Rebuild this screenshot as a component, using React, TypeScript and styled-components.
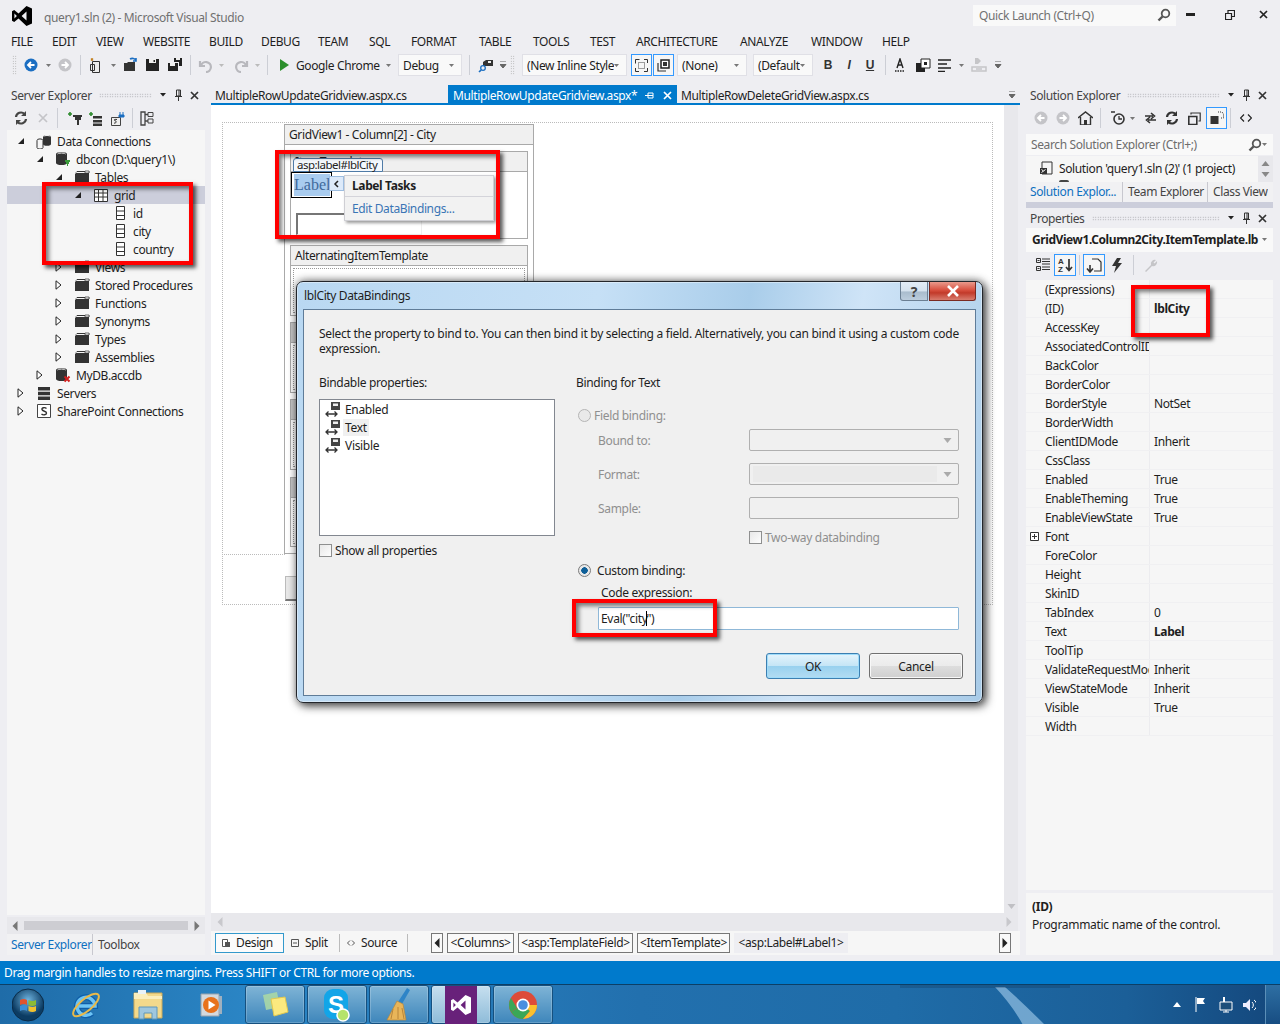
import React from "react";
import styled, { createGlobalStyle } from "styled-components";

const Global = createGlobalStyle`
  html, body { margin: 0; padding: 0; background: #eeeef2; }
  * { box-sizing: border-box; }
  body { font-family: "Noto Sans", "Open Sans", sans-serif; font-size: 12px; letter-spacing: -0.38px; color: #1e1e1e; }
  svg { display: block; flex: none; }
`;

const Page = styled.div`
  position: relative; width: 1280px; height: 1024px; overflow: hidden;
  display: flex; flex-direction: column; background: #eeeef2;
`;
/* ---------- title + menu ---------- */
const TitleBar = styled.div`height: 31px; display: flex; align-items: center; padding-left: 12px; flex: none;`;
const TitleText = styled.div`margin-left: 12px; margin-top: 3px; color: #717171; width: 929px; flex: none;`;
const QuickLaunch = styled.div`
  width: 203px; height: 21px; margin-top: -1px; background: #f9f9f9; color: #717171; flex: none;
  display: flex; align-items: center; justify-content: space-between; padding: 0 5px 0 6px;
`;
const WinBtns = styled.div`display: grid; grid-template-columns: 39px 34px 9px; align-items: center; margin: -2px 0 0 10px;`;
const MenuBar = styled.div`height: 20px; display: flex; align-items: center; padding-left: 11px; flex: none;`;
const MenuItem = styled.div<{ $w: number }>`width: ${p => p.$w}px; flex: none; white-space: nowrap;`;
/* ---------- toolbar ---------- */
const ToolBar = styled.div`height: 28px; display: flex; align-items: center; padding-left: 12px; flex: none;`;
const Slot = styled.div<{ $w: number; $on?: boolean; $ml?: number }>`
  width: ${p => p.$w}px; height: 22px; flex: none; display: flex; align-items: center; justify-content: center; margin-left: ${p => p.$ml ?? 0}px;
  ${p => p.$on ? "border: 1px solid #3399ff; background: #f6f6f6;" : ""}
`;
const Grip = styled.div`width: 5px; height: 20px; flex: none; background-image: radial-gradient(#a0a0a0 0.6px, transparent 0.8px); background-size: 2.5px 2.5px;`;
const Sep = styled.div<{ $ml?: number; $mr?: number }>`width: 1px; height: 20px; background: #ccced5; flex: none; margin: 0 ${p => p.$mr ?? 5}px 0 ${p => p.$ml ?? 5}px;`;
const Combo = styled.div<{ $w: number; $ml?: number }>`
  width: ${p => p.$w}px; margin-left: ${p => p.$ml ?? 0}px; height: 22px; background: #f9f9f9; border: 1px solid #e0e0e6; flex: none;
  display: flex; align-items: center; justify-content: space-between; padding: 0 6px 0 4px; white-space: nowrap; overflow: hidden;
`;
const Clip = styled.span`overflow: hidden; min-width: 0;`;
const GlyphB = styled.span<{ $i?: boolean; $u?: boolean }>`
  font-family: "Liberation Sans", sans-serif; font-size: 12px; font-weight: 700; color: #333;
  font-style: ${p => p.$i ? "italic" : "normal"}; text-decoration: ${p => p.$u ? "underline" : "none"};
`;
const PlayText = styled.div`width: 88px; flex: none; white-space: nowrap;`;
/* ---------- main ---------- */
const Main = styled.div`height: 870px; margin-top: 6px; display: flex; padding-left: 7px; flex: none;`;
const Side = styled.div<{ $w: number; $ml?: number }>`width: ${p => p.$w}px; margin-left: ${p => p.$ml ?? 0}px; flex: none; display: flex; flex-direction: column; margin-top: 1px;`;
const PaneHead = styled.div<{ $mt?: number }>`height: 18px; margin-top: ${p => p.$mt ?? 0}px; display: flex; align-items: center; padding-left: 4px; color: #444; flex: none;`;
const HeadDots = styled.div`
  flex: 1; height: 5px; margin: 1px 8px 0 7px;
  background-image: radial-gradient(#a8a8ac 0.65px, transparent 0.85px); background-size: 2.5px 2.5px;
`;
const HeadBtns = styled.div`display: flex; align-items: center; gap: 7px; padding-right: 6px;`;
const PaneTools = styled.div<{ $mt?: number }>`height: 24px; display: flex; align-items: center; flex: none; padding-left: 6px; margin-top: ${p => p.$mt ?? 2}px;`;
const Tree = styled.div`flex: 1; background: #f6f6f6; padding-top: 2px; margin-bottom: 2px;`;
const TreeRow = styled.div<{ $lvl: number; $sel?: boolean }>`
  height: 18px; display: flex; align-items: center; padding-left: ${p => 7 + p.$lvl * 19}px;
  background: ${p => p.$sel ? "#cccedb" : "transparent"}; white-space: nowrap;
`;
const Arrow = styled.div`width: 13px; flex: none; display: flex; justify-content: center;`;
const TreeIcon = styled.div`width: 16px; flex: none; margin: 0 5px 0 9px; display: flex; justify-content: center;`;
const HScroll = styled.div`height: 17px; background: #e8e8ec; display: flex; align-items: center; padding: 0 5px; gap: 6px; flex: none;`;
const Thumb = styled.div`flex: 1; height: 9px; background: #cdcdd2;`;
const DockTabs = styled.div<{ $h: number }>`height: ${p => p.$h}px; display: flex; align-items: center; background: #f1f1f3; flex: none; padding-left: 4px; color: #444;`;
const DockTab = styled.div<{ $w: number; $on?: boolean; $sep?: boolean; $pb?: number }>`
  width: ${p => p.$w}px; height: 100%; display: flex; align-items: center; white-space: nowrap; overflow: hidden; padding: 0 0 ${p => p.$pb ?? 0}px ${p => p.$on ? 0 : 5}px; flex: none;
  color: ${p => p.$on ? "#0e70c0" : "#444"}; border-right: ${p => p.$sep ? "1px solid #c8c8cf" : "none"};
`;
/* centre */
const Center = styled.div`width: 809px; margin-left: 6px; flex: none; display: flex; flex-direction: column;`;
const DocTabs = styled.div`height: 20px; flex: none; display: flex; align-items: stretch; border-bottom: 2px solid #007acc;`;
const DocTab = styled.div<{ $w: number; $on?: boolean }>`
  width: ${p => p.$w}px; flex: none; display: flex; align-items: center; padding: 3px 0 0 ${p => p.$on ? 5 : 4}px; gap: 4px; white-space: nowrap;
  background: ${p => p.$on ? "#007acc" : "transparent"}; color: ${p => p.$on ? "#fff" : "#1e1e1e"};
`;
const DocTabName = styled.span`width: 188px; flex: none;`;
const TabClose = styled.span`margin-left: 5px;`;
const DocMore = styled.div`margin-left: auto; padding: 1px 4px 0 0; align-self: center;`;
const DocBody = styled.div`flex: 1; display: flex; min-height: 0;`;
const Canvas = styled.div`width: 793px; background: #fff; flex: none; padding: 17px 0 0 11px;`;
const VBar = styled.div`width: 14px; background: #e8e8ec; display: flex; align-items: flex-end; justify-content: center; padding-bottom: 4px;`;
const HBar = styled.div`
  height: 18px; width: 807px; background: #e8e8ec; flex: none; display: flex; align-items: center; justify-content: space-between; padding: 0 6px 0 6px;
`;
const ViewBar = styled.div`height: 24px; flex: none; background: #f6f6f6; display: flex; align-items: center; padding: 0 0 1px 4px; width: 809px;`;
const ViewBtn = styled.div<{ $w: number; $on?: boolean }>`
  width: ${p => p.$w}px; height: 20px; flex: none; display: flex; align-items: center; padding-left: ${p => p.$on ? 6 : 7}px; gap: 6px;
  ${p => p.$on ? "border: 1px solid #3399cc; background: #fbfbfb;" : ""}
`;
const ViewSep = styled.div`width: 1px; height: 18px; background: #bbb; flex: none;`;
const Crumb = styled.div<{ $w: number; $plain?: boolean }>`
  width: ${p => p.$w}px; height: 20px; flex: none; margin-left: 4px; display: flex; align-items: center; justify-content: center; white-space: nowrap;
  border: ${p => p.$plain ? "none" : "1px solid #777"}; background: ${p => p.$plain ? "#eeeef2" : "#f9f9f9"};
`;
const CrumbNav = styled.div<{ $ml: number }>`
  width: 12px; height: 20px; flex: none; margin-left: ${p => p.$ml}px; border: 1px solid #777; background: #f9f9f9;
  display: flex; align-items: center; justify-content: center;
`;
/* design surface */
const Margins = styled.div`
  width: 771px; height: 483px; border: 1px dotted #bbb; padding: 1px 0 0 61px;
`;
const GridBox = styled.div`
  width: 250px; height: 430px; border: 1px solid #a9a9a9; position: relative; background: #fff;
`;
const BoxHead = styled.div<{ $dim?: boolean }>`height: 20px; background: ${p => p.$dim ? "#c9c9c9" : "#f0f0f0"}; border-bottom: 1px solid #a9a9a9; padding-left: 4px; display: flex; align-items: center; flex: none;`;
const Tpl = styled.div<{ $h: number; $mt: number }>`
  width: 238px; margin: ${p => p.$mt}px 0 0 5px; height: ${p => p.$h}px; border: 1px solid #a9a9a9; background: #fff; display: flex; flex-direction: column;
`;
const TplDots = styled.div`flex: 1; margin: 2px; border: 1px dotted #999;`;
const TplBody = styled.div`padding: 0; display: flex; flex-direction: column; position: relative;`;
const LabelWrap = styled.div`
  width: 41px; height: 26px; border: 1px solid #000; padding: 1px 0 0 2px;
`;
const LabelSel = styled.div`
  width: 36px; height: 22px; background: #a9ccef; font-family: "Liberation Serif", serif; font-size: 16px; color: #40699b; line-height: 22px; letter-spacing: 0; white-space: nowrap;
`;
const FakeInput = styled.div`
  width: 126px; height: 22px; margin: 15px 0 0 5px; border-top: 2px solid #767676; border-left: 2px solid #767676; border-right: 1px solid #eee; border-bottom: 1px solid #eee;
`;
const TagChip = styled.div`
  position: absolute; left: 2px; top: -14px; height: 14px; width: 90px; background: #f4f8fd; border: 1px solid #4f7ba7; border-radius: 3px 3px 0 0;
  font-size: 11.5px; line-height: 12px; padding-left: 3px; white-space: nowrap; color: #222; letter-spacing: -0.5px;
`;
const Chevron = styled.div`
  position: absolute; left: 38px; top: 4px; width: 15px; height: 15px; background: #ddeafa; border: 1px solid #9dbde0; display: flex; align-items: center; justify-content: center; z-index: 2;
`;
const Tasks = styled.div`
  position: absolute; left: 53px; top: 3px; width: 150px; height: 46px; background: #f2f2f2; border: 1px solid #cfcfd4; box-shadow: 2px 2px 3px #0006; z-index: 1;
`;
const TasksHead = styled.div`height: 21px; font-weight: 700; padding: 0 0 2px 7px; display: flex; align-items: center; border-bottom: 1px solid #d4d4da;`;
const TasksLink = styled.div`height: 23px; padding-left: 7px; display: flex; align-items: center; color: #3a75b5;`;
const FootBtn = styled.div`margin: 22px 0 0 1px; width: 60px; height: 25px; background: #e8e8e8; border: 1px solid #bbb; border-bottom: 2px solid #777;`;
const OutDot = styled.div`position: absolute; left: -63px; top: 429px; width: 63px; border-top: 1px dotted #bbb;`;
/* right */
const SearchBox = styled.div`height: 21px; background: #f9f9f9; display: flex; align-items: center; padding: 0 2px 0 5px; margin-top: 4px; color: #6d6d6d; flex: none; justify-content: space-between;`;
const SolRow = styled.div`height: 26px; background: #f6f6f6; margin-top: 1px; display: flex; align-items: center; padding: 0 0 2px 13px; gap: 6px; flex: none; white-space: nowrap; position: relative;`;
const SolNext = styled.div`position: absolute; left: 33px; bottom: 0; width: 10px; height: 2px; background: #444; border-radius: 4px 4px 0 0;`;
const MiniScroll = styled.div`position: absolute; right: 0; top: 0; bottom: 0; width: 15px; background: #e8e8ec; display: flex; flex-direction: column; align-items: center; justify-content: center; gap: 6px;`;
const Strip = styled.div`height: 6px; background: #cccedb; flex: none;`;
const PropCombo = styled.div`height: 24px; background: #f9f9f9; margin-top: 1px; display: flex; align-items: center; justify-content: space-between; padding: 0 5px 2px 6px; font-weight: 700; white-space: nowrap; overflow: hidden; flex: none; letter-spacing: -0.42px;`;
const PropGrid = styled.div`flex: 1; background: #f6f6f6; margin-top: 3px; min-height: 0;`;
const PropRow = styled.div`
  height: 19px; display: grid; grid-template-columns: 16px 108px 1fr; align-items: center; white-space: nowrap; border-bottom: 1px solid #f0f0f2;
`;
const PlusCell = styled.div`display: flex; justify-content: center;`;
const PropName = styled.div`padding: 1px 0 0 3px; overflow: hidden; height: 100%; line-height: 18px; background: #f6f6f6; border-right: 1px solid #ececef;`;
const PropVal = styled.div<{ $b?: boolean }>`padding-left: 4px; font-weight: ${p => p.$b ? 700 : 400};`;
const PropDesc = styled.div`height: 62px; background: #f6f6f6; margin-top: 3px; padding: 5px 6px; flex: none; letter-spacing: -0.3px;`;
const DescTitle = styled.div`font-weight: 700; line-height: 18px;`;
const DescLine = styled.div`line-height: 18px;`;
/* status + taskbar */
const Status = styled.div`height: 23px; margin-top: 6px; background: #007acc; color: #fff; display: flex; align-items: center; padding-left: 4px; flex: none;`;
const Taskbar = styled.div`
  height: 40px; flex: none; position: relative; display: flex; align-items: stretch; overflow: hidden;
  border-top: 1px solid #0c3f66;
  background: linear-gradient(90deg, #1f6ca8 0%, #2b86c6 20%, #2270ae 50%, #1f6ca8 70%, #1b5f98 88%, #14477c 100%);
`;
const Swoosh = styled.svg`position: absolute; left: 900px; top: 0; pointer-events: none;`;
const PinCell = styled.div<{ $w: number }>`width: ${p => p.$w}px; flex: none; display: flex; align-items: center; justify-content: center; position: relative;`;
const Tile = styled.div<{ $hot?: boolean }>`
  width: 60px; margin-right: 2px; flex: none; display: flex; align-items: center; justify-content: center; position: relative;
  border: 1px solid #15507f; border-radius: 3px; box-shadow: inset 0 0 0 1px #ffffff33;
  background: linear-gradient(180deg, ${p => p.$hot ? "#c6dfef, #8fbcd9" : "#7fb4d6, #3e86bb"});
`;
const Tray = styled.div`margin-left: auto; display: flex; align-items: center; position: relative;`;
const ShowDesk = styled.div`width: 15px; align-self: stretch; margin-left: 7px; border-left: 1px solid #5b8fb8; background: linear-gradient(180deg, #2e6fa3, #174d82);`;
/* red highlight */
const Red = styled.div<{ $x: number; $y: number; $w: number; $h: number }>`
  position: absolute; left: ${p => p.$x}px; top: ${p => p.$y}px; width: ${p => p.$w}px; height: ${p => p.$h}px; z-index: 20;
  border: 4px solid #f00; pointer-events: none;
  box-shadow: 3px 3px 4px rgba(0,0,0,.65), inset 3px 3px 4px rgba(0,0,0,.5);
`;
/* dialog */
const Dialog = styled.div`
  position: absolute; left: 296px; top: 281px; width: 687px; height: 422px; z-index: 10; border-radius: 7px; border: 1px solid #23262b;
  background: linear-gradient(100deg, #b9d8f2 0%, #c6e0f6 40%, #a9cdea 60%, #cfe4f7 75%, #a8cbe8 100%);
  box-shadow: 0 0 0 1px #fff6 inset, 3px 3px 10px rgba(0,0,0,.7), 0 -1px 8px rgba(0,0,0,.35); padding: 0 6px 6px 6px; display: flex; flex-direction: column;
`;
const DlgTitle = styled.div`height: 27px; flex: none; display: flex; align-items: center; padding-left: 1px; position: relative;`;
const DlgBtns = styled.div`position: absolute; right: 0; top: 0; display: flex; gap: 1px;`;
const DlgHelp = styled.div`width: 28px; height: 19px; border: 1px solid #6b7f93; border-top: none; border-radius: 0 0 0 3px; background: linear-gradient(#e3edf7 0%, #d5e2ee 50%, #a9bccd 55%, #bccddd 100%); display: flex; align-items: center; justify-content: center; font-weight: 700; font-size: 14px; color: #444;`;
const DlgClose = styled.div`width: 47px; height: 19px; border: 1px solid #7a2a22; border-top: none; border-radius: 0 0 3px 0; background: linear-gradient(#e99a8c 0%, #d8503f 45%, #c23a2a 60%, #d87c6e 100%); display: flex; align-items: center; justify-content: center;`;
const DlgBody = styled.div`flex: 1; background: #f0f0f0; border: 1px solid #5f7c98; padding: 16px 15px 0 15px; letter-spacing: -0.32px; position: relative;`;
const DlgDesc = styled.div`line-height: 15px; width: 650px; height: 30px; letter-spacing: -0.28px;`;
const DlgCols = styled.div`display: grid; grid-template-columns: 236px 383px; column-gap: 21px; margin-top: 19px;`;
const ColLabel = styled.div`height: 16px; line-height: 15px;`;
const ListBox = styled.div`height: 137px; background: #fff; border: 1px solid #828790; margin-top: 8px; padding: 0 0 0 5px;`;
const ListRow = styled.div`height: 18px; display: flex; align-items: center; gap: 2px;`;
const ListText = styled.span<{ $hi?: boolean }>`padding: 0 2px; ${p => p.$hi ? "background: #f0f0f0;" : ""}`;
const CheckRow = styled.div<{ $off?: boolean; $ml?: number; $mt: number }>`display: flex; align-items: center; gap: 3px; margin: ${p => p.$mt}px 0 0 ${p => p.$ml ?? 0}px; height: 16px; color: ${p => p.$off ? "#8f8f8f" : "inherit"};`;
const Check = styled.div`width: 13px; height: 13px; border: 1px solid #8e8f8f; background: linear-gradient(135deg, #e8e8e8, #fdfdfd);`;
const RadioRow = styled.div<{ $off?: boolean; $mt: number; $gap: number }>`display: flex; align-items: center; gap: ${p => p.$gap}px; margin: ${p => p.$mt}px 0 0 2px; height: 16px; color: ${p => p.$off ? "#8f8f8f" : "inherit"};`;
const Radio = styled.div<{ $on?: boolean }>`
  width: 13px; height: 13px; border-radius: 50%; border: 1px solid ${p => p.$on ? "#7b7b7b" : "#b5b5b5"}; background: ${p => p.$on ? "radial-gradient(circle, #0e5f98 0 3px, #e8e8e8 3.5px)" : "#e9e9e9"};
`;
const FieldRow = styled.div<{ $mt: number }>`display: grid; grid-template-columns: 173px 210px; align-items: center; height: 22px; margin-top: ${p => p.$mt}px;`;
const FieldLbl = styled.div`color: #8f8f8f; padding-left: 22px;`;
const FieldBox = styled.div`
  height: 22px; background: #f0f0f0; border: 1px solid #b0b0b0; border-radius: 2px; display: flex; align-items: center; justify-content: flex-end; padding: 2px 6px 2px 3px; gap: 6px;
`;
const FieldInner = styled.div`flex: 1; height: 100%; background: #eaeaea;`;
const CodeLbl = styled.div`margin: 7px 0 0 25px; height: 16px; line-height: 15px;`;
const CodeInput = styled.div`
  height: 23px; margin: 6px 0 0 22px; background: #fff; border: 1px solid #8fb8d8; border-radius: 1px; padding-left: 2px; display: flex; align-items: center;
`;
const Caret = styled.span`display: inline-block; width: 1px; height: 15px; background: #000; margin: 0 -1px; vertical-align: middle;`;
const DlgActions = styled.div`display: flex; justify-content: flex-end; gap: 9px; margin: 23px -3px 0 0;`;
const DlgBtn = styled.div<{ $def?: boolean }>`
  width: 94px; height: 26px; border-radius: 3px; display: flex; align-items: center; justify-content: center;
  border: 1px solid ${p => p.$def ? "#3c7fb1" : "#707070"};
  background: ${p => p.$def ? "linear-gradient(#e5f4fc 0%, #c4e5f6 50%, #98d1ef 51%, #b3dcf2 100%)" : "linear-gradient(#f2f2f2 0%, #ebebeb 50%, #dddddd 51%, #cfcfcf 100%)"};
  box-shadow: ${p => p.$def ? "inset 0 0 0 1px #9fdcfa" : "inset 0 0 0 1px #f8f8f8"};
`;

/* ---------- icons ---------- */
const S = ({ w = 16, h = 16, children }: { w?: number; h?: number; children: React.ReactNode }) => (
  <svg width={w} height={h} viewBox={`0 0 ${w} ${h}`}>{children}</svg>
);
const Dd = ({ c = "#555" }: { c?: string }) => <S w={7} h={4}><path d="M0 0h6L3 3.500z" fill={c} /></S>;
const DdSmall = ({ c = "#777" }: { c?: string }) => <S w={6} h={3}><path d="M0 0h5L2.500 3z" fill={c} /></S>;
const Overflow = () => <S w={7} h={8}><path d="M0 0h6M0 3.500h6L3 7z" stroke="#666" strokeWidth="1" fill="#666" /></S>;
const XIco = ({ c = "#333", s = 9, sw = 1.7 }: { c?: string; s?: number; sw?: number }) => <S w={s} h={s}><path d={`M1 1L${s - 1} ${s - 1}M${s - 1} 1L1 ${s - 1}`} stroke={c} strokeWidth={sw} /></S>;
const Pin = ({ c = "#333" }: { c?: string }) => <S w={9} h={12}><path d="M2.500 1h4v6h-4zM1 7.500h7M4.500 8v4M5 1v6" stroke={c} fill="none" /></S>;
const PaneBtns = () => (
  <HeadBtns><Dd c="#222" /><Pin /><XIco /></HeadBtns>
);
const Mag = ({ c = "#555" }: { c?: string }) => <S w={14} h={14}><circle cx="8.500" cy="5.500" r="3.800" fill="none" stroke={c} strokeWidth="1.800" /><path d="M5.500 8.500L1.500 12.500" stroke={c} strokeWidth="2.400" /></S>;
const VsLogo = ({ c = "#000", w = 20, h = 20 }: { c?: string; w?: number; h?: number }) => (
  <svg width={w} height={h} viewBox="0 0 20 20"><path fill={c} fillRule="evenodd" d="M14.500 0L20 2.400v15.200L14.500 20 6.500 12.600 2.200 16 0 14.800V5.200L2.200 4l4.300 3.400zM14.500 5.500L9.600 10l4.900 4.500zM2.400 7.500v5L4.900 10z" /></svg>
);
const BackC = ({ c }: { c: string }) => <S w={14} h={14}><circle cx="7" cy="7" r="6.500" fill={c} /><path d="M10.500 7H4.500M7 4L4 7l3 3" stroke="#fff" strokeWidth="1.800" fill="none" /></S>;
const FwdC = ({ c }: { c: string }) => <S w={14} h={14}><circle cx="7" cy="7" r="6.500" fill={c} /><path d="M3.500 7h6M7 4l3 3-3 3" stroke="#fff" strokeWidth="1.800" fill="none" /></S>;
const NewProj = () => <S><path d="M4.500 4.500h7v11h-7zM2.500 7.500h4v6h-4z" fill="#eee" stroke="#333" /><path d="M3 1.500l1 1 1-1M3 3.500l1-1 1 1" stroke="#c27d1a" strokeWidth="1.200" fill="none" /></S>;
const OpenF = () => <S><path d="M1 6h3l1-1h7v9H1z" fill="#333" /><path d="M7 2a4 3 0 016 1M13 1v3h-3" stroke="#1b6ec2" strokeWidth="1.600" fill="none" /></S>;
const Save = () => <S><path d="M1 2h13v12H1z" fill="#222" /><path d="M4 2h7v4H4z" fill="#eee" /><path d="M8.500 3h1.500v2H8.500z" fill="#222" /></S>;
const SaveAll = () => <S><path d="M1 6h10v8H1z" fill="#222" /><path d="M3 6h5v3H3z" fill="#eee" /><path d="M7 1h8v8h-3V5H7z" fill="#222" /><path d="M9 1h4v2H9z" fill="#eee" /></S>;
const Undo = ({ flip }: { flip?: boolean }) => <svg width="15" height="15" viewBox="0 0 15 15" style={flip ? { transform: "scaleX(-1)" } : undefined}><path d="M2 3v5h5M3 8a5 5 0 115 6" stroke="#b8b8bd" strokeWidth="2.200" fill="none" /></svg>;
const Play = () => <S w={11} h={12}><path d="M1 0l9 6-9 6z" fill="#2c8f2c" /></S>;
const FindIco = () => <S><path d="M8 3h7v6H8zM5 5l3-2v6H5z" fill="#333" /><path d="M10 4h3v2h-3z" fill="#eee" /><circle cx="5" cy="11" r="2.300" fill="none" stroke="#1b6ec2" strokeWidth="1.300" /><path d="M3.300 12.800L1 15" stroke="#1b6ec2" strokeWidth="1.600" /></S>;
const Resize = () => <S w={13} h={13}><path d="M.5 4.500v-4h4M.5 9v3.500H4M9 .5h3.500V4M12.500 9v3.500H9" fill="none" stroke="#333" /><path d="M3.500 3.500h6v6h-6z" fill="none" stroke="#444" strokeDasharray="1 1" /></S>;
const Abso = () => <S w={14} h={14}><path d="M1 5v8h8" fill="none" stroke="#333" strokeWidth="1.200" /><path d="M4 2h8v8H4z" fill="#fff" stroke="#222" strokeWidth="1.500" /><path d="M6 4h4v4H6z" fill="#333" /></S>;
const AIco = () => <S w={12} h={15}><path d="M3 10L6 1l3 9M4 7h4" stroke="#222" strokeWidth="1.400" fill="none" /><path d="M1 13h10" stroke="#222" strokeWidth="1.600" strokeDasharray="1.500 1" /></S>;
const BgIco = () => <S><path d="M1 6h9v9H1z" fill="#222" /><path d="M6 2h9v9H6z" fill="#fff" stroke="#222" /><path d="M9 5h3v3H9z" fill="#222" /></S>;
const AlignIco = () => <S w={14} h={13}><path d="M0 1h13M0 5h9M0 9h13M0 12.500h7" stroke="#222" strokeWidth="1.600" /></S>;
const LinkIco = () => <S><path d="M4 1h3l3 3-3 3H4z" fill="#c5c5c8" /><path d="M1 10h14v4H1z" fill="none" stroke="#c5c5c8" strokeWidth="1.500" /><path d="M5 12h6" stroke="#c5c5c8" strokeWidth="1.500" /></S>;
const Refresh = ({ c = "#444" }: { c?: string }) => <S w={14} h={14}><path d="M2 6a5 5 0 018.500-3M12 8a5 5 0 01-8.500 3" stroke={c} strokeWidth="2.200" fill="none" /><path d="M12 0v5H7zM2 14V9h5z" fill={c} /></S>;
const PlugAdd = () => <S w={15} h={15}><path d="M1 3h4M3 1v4" stroke="#2d8a2d" strokeWidth="1.600" /><path d="M6 4h9v2h-1v3H8V6H6zM10 9h2v5h-2z" fill="#333" /></S>;
const ServAdd = () => <S w={15} h={15}><path d="M1 3h4M3 1v4" stroke="#2d8a2d" strokeWidth="1.600" /><path d="M5 5h9v2.500H5zM5 9h9v2.500H5zM5 12.500h9V15H5z" fill="#333" /></S>;
const SpAdd = () => <S w={15} h={15}><path d="M1.500 6.500h9v8h-9z" fill="#eee" stroke="#444" /><path d="M4 12c2 1 3-2 1-2.500S5 8 7 8.500" stroke="#333" fill="none" /><path d="M10 1v3M13 1v3M9 4h5v2h-5z" stroke="#1b6ec2" fill="#1b6ec2" /></S>;
const TreeV = () => <S w={14} h={15}><path d="M1 1h4v13H1zM5 3.500h3M5 10h3" fill="none" stroke="#444" strokeWidth="1.300" /><path d="M8 1.500h5v4H8zM8 8h5v4H8z" fill="none" stroke="#444" /></S>;
const TriOpen = () => <S w={8} h={8}><path d="M7 1v6H1z" fill="#222" /></S>;
const TriClosed = () => <S w={7} h={10}><path d="M1 .8l5 4.200-5 4.200z" fill="#fff" stroke="#222" /></S>;
const DbIco = () => <S w={16} h={15}><path d="M1 6.500a3 1.600 0 016 0v7a3 1.600 0 01-6 0z" fill="#f6f6f6" stroke="#333" /><path d="M7 3a4 1.800 0 018 0v7a4 1.800 0 01-8 0z" fill="#333" /><path d="M8 2.500a3 1 0 016 0" stroke="#f6f6f6" fill="none" /></S>;
const DbOne = ({ mark }: { mark: "plug" | "x" }) => <S w={16} h={16}><path d="M1 3a5.500 2 0 0111 0v9a5.500 2 0 01-11 0z" fill="#333" /><path d="M2.500 3a4 1 0 018 0" stroke="#f6f6f6" fill="none" />{mark === "plug" ? <path d="M10 9h5v2h-1v2h-3v-2h-1zM12 13h1v2h-1z" fill="#3a9a3a" /> : <path d="M9.500 9.500l5 5M14.500 9.500l-5 5" stroke="#d01f1f" strokeWidth="2" />}</S>;
const Folder = () => <S w={15} h={14}><path d="M0 13V4l1-1h13V13z" fill="#333" /><path d="M1 2.500l1-1h7l5 0v1" fill="none" stroke="#333" /><path d="M10 1h4v2h-4z" fill="#f6f6f6" stroke="#333" strokeWidth=".7" /></S>;
const TableI = () => <S w={14} h={13}><path d="M.5.5h13v12H.5z" fill="#fff" stroke="#333" /><path d="M.5 4h13M.5 8h13M4.500.5v12M9 .5v12" stroke="#333" /></S>;
const ColI = () => <S w={9} h={14}><path d="M.5.5h8v13h-8zM.5 5h8M.5 9.500h8" fill="#fff" stroke="#333" /></S>;
const ServerI = () => <S w={12} h={13}><path d="M0 0h12v3.500H0zM0 4.700h12v3.500H0zM0 9.400h12v3.500H0z" fill="#333" /></S>;
const SpI = () => <S w={14} h={14}><path d="M.5.5h13v13H.5z" fill="#fff" stroke="#444" /><path d="M9.500 4.500C8 3 4.500 3.500 5 5.500s4.500 1.500 4.500 3.500-3.500 2.500-5 1" stroke="#333" strokeWidth="1.400" fill="none" /></S>;
const Home = () => <S w={15} h={14}><path d="M0 7l7.500-6L15 7M2.500 6v8h10V6" fill="none" stroke="#333" strokeWidth="1.400" /><path d="M6 9h3v5H6z" fill="#333" /></S>;
const Clock = () => <S w={15} h={14}><circle cx="9" cy="8" r="5" fill="none" stroke="#333" strokeWidth="1.600" /><path d="M9 5v3h3M1 1h4" stroke="#333" strokeWidth="1.300" fill="none" /></S>;
const SyncArr = () => <S w={13} h={12}><path d="M1 4h8M7 1l3.500 3L7 7M12 8H4M6 5L2.500 8 6 11" stroke="#333" strokeWidth="1.600" fill="none" /></S>;
const Stack = () => <S w={13} h={13}><path d="M.8 4.500h8v8h-8z" fill="none" stroke="#333" strokeWidth="1.600" /><path d="M3 2.500V1h9.200v8H10.500" fill="none" stroke="#333" strokeWidth="1.200" /></S>;
const Files = () => <S w={14} h={14}><path d="M.5 5h8v8h-8z" fill="#333" /><path d="M8 1h4l1.500 2v4H10" fill="none" stroke="#333" strokeDasharray="1 1" /></S>;
const SlnI = () => <S w={14} h={14}><path d="M3 1h10v12H3z" fill="none" stroke="#333" /><path d="M1 7h7v6H1z" fill="#333" /><path d="M2.500 8.500l2 1.500-2 1.500M6.500 8.500l-2 1.500" stroke="#fff" fill="none" /></S>;
const PropCat = () => <S w={15} h={14}><path d="M.5.5h4v4h-4zM.5 8.500h4v4h-4z" fill="none" stroke="#333" /><path d="M1.500 2.500h2M1.500 10.500h2M6 1h8M6 3.500h8M6 6h8M6 9h8M6 11.500h8" stroke="#333" /></S>;
const AzIco = () => <S w={17} h={16}><text x="1" y="7" fontSize="8" fontWeight="700" fill="#333" fontFamily="Liberation Sans">A</text><text x="1" y="15" fontSize="8" fontWeight="700" fill="#333" fontFamily="Liberation Sans">Z</text><path d="M12 2v11M9 10l3 3.500L15 10" stroke="#333" strokeWidth="1.700" fill="none" /></S>;
const PropPage = () => <S w={16} h={15}><path d="M6 1h6l3 3v9H8" fill="none" stroke="#333" strokeWidth="1.200" /><path d="M4 7v6M1 10.500L4 14l3-3.500" stroke="#333" strokeWidth="1.600" fill="none" /></S>;
const Bolt = () => <S w={11} h={15}><path d="M6 0h4L7 5h4L3 15l2-7H1z" fill="#333" /></S>;
const Wrench = () => <S w={14} h={14}><path d="M1 13l6-6a4 4 0 015-5L9.500 4.500l1 1L13 3a4 4 0 01-5 5l-6 6z" fill="#c5c5c8" /></S>;
const Bind = () => <S w={16} h={16}><path d="M6 1h9v8H6z" fill="#444" /><path d="M8 2.500h5V5H8z" fill="#eee" /><path d="M1 13h11M3.500 10.500L1 13l2.500 2.500M9.500 10.500L12 13l-2.500 2.500" stroke="#333" strokeWidth="1.300" fill="none" /></S>;
const Chev = () => <S w={7} h={8}><path d="M5 1L2 4l3 3" stroke="#222" strokeWidth="1.500" fill="none" /></S>;
const NavTri = ({ right, c = "#222" }: { right?: boolean; c?: string }) => <S w={6} h={10}><path d={right ? "M.5 0l5 5-5 5z" : "M5.500 0l-5 5 5 5z"} fill={c} /></S>;
const UpTri = () => <S w={9} h={5}><path d="M4.500 0l4 5H.5z" fill="#888" /></S>;
const DownTri = ({ c = "#c0c0c4" }: { c?: string }) => <S w={9} h={5}><path d="M.5 0h8l-4 5z" fill={c} /></S>;
const Plus = () => <S w={9} h={9}><path d="M.5.5h8v8h-8z" fill="#fff" stroke="#333" /><path d="M2 4.500h5M4.500 2v5" stroke="#333" /></S>;
const Orb = () => <S w={32} h={34}><defs><radialGradient id="orb" cx="50%" cy="35%"><stop offset="0" stopColor="#6fb4e0" /><stop offset="1" stopColor="#0c3c63" /></radialGradient></defs><circle cx="16" cy="17" r="16" fill="url(#orb)" stroke="#0b2c48" /><path d="M8 12q4-2 7 0v5q-3-2-7 0z" fill="#e2542f" /><path d="M16.500 12q4 2 7.500 0v5q-3.500 2-7.500 0z" fill="#8dbb35" /><path d="M8 18q4-2 7 0v5q-3-2-7 0z" fill="#3b8fd9" /><path d="M16.500 18q4 2 7.500 0v5q-3.500 2-7.500 0z" fill="#f2c12e" /></S>;
const IeIco = () => <S w={32} h={34}><path d="M8 18h17a9 9 0 10-3 7" stroke="#0f5ea8" strokeWidth="6" fill="none" /><path d="M8 18h17a9 9 0 10-3 7" stroke="#6cc4f5" strokeWidth="3.500" fill="none" /><ellipse cx="16" cy="17" rx="16" ry="6" transform="rotate(-40 16 17)" fill="none" stroke="#e8b94a" strokeWidth="2" /></S>;
const Explorer = () => <S w={32} h={34}><path d="M2 5h28v25H2z" fill="#f3d98b" stroke="#caa95a" /><path d="M2 5h12l2 3h14v3H2z" fill="#fbeebd" /><path d="M6 2h8v4H6z" fill="#e9f2f8" /><path d="M7 19h18v12h-5v-6h-8v6H7z" fill="#9fc7de" stroke="#5f97ba" /></S>;
const Media = () => <S w={26} h={30}><path d="M2 4h18v22H2z" fill="#d5d9dd" stroke="#98a3ad" /><circle cx="12" cy="15" r="8" fill="#e8721c" /><path d="M9.500 10.500l7 4.500-7 4.500z" fill="#fff" /><path d="M20 6h3v18h-3z" fill="#9fb0bf" /></S>;
const Sticky = () => <S w={30} h={28}><path d="M3 4l14-3 3 15-14 3z" fill="#a8d7a6" opacity=".9" /><path d="M11 8l14-2 3 15-14 4z" fill="#fbe97f" stroke="#e1c84f" /></S>;
const Skype = () => <S w={28} h={34}><rect x="1" y="1" width="24" height="30" rx="9" fill="#12a5e8" /><text x="5" y="25" fontSize="24" fontWeight="700" fill="#fff" fontFamily="Liberation Sans">S</text><circle cx="20" cy="27" r="6" fill="#b5e36b" stroke="#fff" strokeWidth="1.500" /></S>;
const Broom = () => <S w={30} h={36}><path d="M23 1l3 2-8 14-4-2z" fill="#2e84c7" /><path d="M13 14l6 3 3 16H3z" fill="#e8b559" stroke="#b8863a" strokeWidth=".7" /><path d="M9 22l-2 10M14 20v12M18 21l2 11" stroke="#b8863a" /></S>;
const VsTile = () => <S w={32} h={38}><path d="M0 0h32v38H0z" fill="#68217a" /><g transform="translate(6 9)"><path fill="#fff" fillRule="evenodd" d="M14.500 0L20 2.400v15.200L14.500 20 6.500 12.600 2.200 16 0 14.800V5.200L2.200 4l4.300 3.400zM14.500 5.500L9.600 10l4.900 4.500zM2.400 7.500v5L4.900 10z" /></g></S>;
const Chrome = () => <S w={30} h={30}><circle cx="15" cy="15" r="14" fill="#dd4b39" /><path d="M15 15L3 22A14 14 0 0015 29l7-8z" fill="#3aa757" /><path d="M15 15l7 6-7 8A14 14 0 0029 15z" fill="#fbc02d" /><path d="M3 8l6 10L3 22A14 14 0 013 8z" fill="#3aa757" /><circle cx="15" cy="15" r="6.500" fill="#fff" /><circle cx="15" cy="15" r="4.800" fill="#4a8fe0" /></S>;
const Flag = () => <S w={12} h={15}><path d="M1 0v15" stroke="#fff" /><path d="M2 1h8l-2 3 2 3H2z" fill="#fff" /></S>;
const Net = () => <S w={14} h={16}><path d="M1 5h12v8H1z" fill="#1d4f7a" stroke="#fff" /><path d="M4 15h6M7 13v2" stroke="#fff" /><path d="M4 0h2v5H4z" fill="#fff" /></S>;
const Vol = () => <S w={14} h={14}><path d="M1 5h3l4-4v12L4 9H1z" fill="#eef" /><path d="M10 4a4 4 0 010 6M12 2a6 6 0 010 10" stroke="#fff" fill="none" /></S>;

/* ---------- data ---------- */
const menus: [string, number][] = [["FILE", 41], ["EDIT", 44], ["VIEW", 47], ["WEBSITE", 66], ["BUILD", 52], ["DEBUG", 57], ["TEAM", 51], ["SQL", 42], ["FORMAT", 68], ["TABLE", 54], ["TOOLS", 57], ["TEST", 46], ["ARCHITECTURE", 104], ["ANALYZE", 71], ["WINDOW", 71], ["HELP", 40]];
type Node = { t: string; l: number; a?: "o" | "c"; i: React.ReactNode; sel?: boolean };
const tree: Node[] = [
  { t: "Data Connections", l: 0, a: "o", i: <DbIco /> },
  { t: "dbcon (D:\\query1\\)", l: 1, a: "o", i: <DbOne mark="plug" /> },
  { t: "Tables", l: 2, a: "o", i: <Folder /> },
  { t: "grid", l: 3, a: "o", i: <TableI />, sel: true },
  { t: "id", l: 4, i: <ColI /> },
  { t: "city", l: 4, i: <ColI /> },
  { t: "country", l: 4, i: <ColI /> },
  { t: "Views", l: 2, a: "c", i: <Folder /> },
  { t: "Stored Procedures", l: 2, a: "c", i: <Folder /> },
  { t: "Functions", l: 2, a: "c", i: <Folder /> },
  { t: "Synonyms", l: 2, a: "c", i: <Folder /> },
  { t: "Types", l: 2, a: "c", i: <Folder /> },
  { t: "Assemblies", l: 2, a: "c", i: <Folder /> },
  { t: "MyDB.accdb", l: 1, a: "c", i: <DbOne mark="x" /> },
  { t: "Servers", l: 0, a: "c", i: <ServerI /> },
  { t: "SharePoint Connections", l: 0, a: "c", i: <SpI /> },
];
const props: [string, string?, boolean?, boolean?][] = [
  ["(Expressions)"], ["(ID)", "lblCity", true], ["AccessKey"], ["AssociatedControlID"], ["BackColor"], ["BorderColor"],
  ["BorderStyle", "NotSet"], ["BorderWidth"], ["ClientIDMode", "Inherit"], ["CssClass"], ["Enabled", "True"], ["EnableTheming", "True"],
  ["EnableViewState", "True"], ["Font", undefined, false, true], ["ForeColor"], ["Height"], ["SkinID"], ["TabIndex", "0"], ["Text", "Label", true],
  ["ToolTip"], ["ValidateRequestMode", "Inherit"], ["ViewStateMode", "Inherit"], ["Visible", "True"], ["Width"],
];

export default function App() {
  return (
    <Page>
      <Global />
      <TitleBar>
        <VsLogo />
        <TitleText>query1.sln (2) - Microsoft Visual Studio</TitleText>
        <QuickLaunch>Quick Launch (Ctrl+Q)<Mag /></QuickLaunch>
        <WinBtns>
          <S w={9} h={4}><path d="M0 0h9v3H0z" fill="#222" /></S>
          <S w={10} h={10}><path d="M.5 3.500h6v6h-6zM3 3V.5h6.500v6H7" fill="none" stroke="#222" strokeWidth="1.200" /></S>
          <XIco c="#222" />
        </WinBtns>
      </TitleBar>
      <MenuBar>{menus.map(([m, w]) => <MenuItem key={m} $w={w}>{m}</MenuItem>)}</MenuBar>
      <ToolBar>
        <Grip />
        <Slot $w={28}><BackC c="#1b6ec2" /></Slot>
        <Slot $w={8}><DdSmall /></Slot>
        <Slot $w={24}><FwdC c="#c4c4c8" /></Slot>
        <Sep $ml={3} $mr={3} />
        <Slot $w={24}><NewProj /></Slot>
        <Slot $w={12}><DdSmall /></Slot>
        <Slot $w={22}><OpenF /></Slot>
        <Slot $w={22}><Save /></Slot>
        <Slot $w={22}><SaveAll /></Slot>
        <Sep $ml={4} $mr={4} />
        <Slot $w={20}><Undo /></Slot>
        <Slot $w={14}><DdSmall c="#bbb" /></Slot>
        <Slot $w={24}><Undo flip /></Slot>
        <Slot $w={10}><DdSmall c="#bbb" /></Slot>
        <Sep $ml={4} $mr={4} />
        <Slot $w={24}><Play /></Slot>
        <PlayText>Google Chrome</PlayText>
        <Slot $w={9}><DdSmall /></Slot>
        <Combo $w={64} $ml={5}>Debug<DdSmall /></Combo>
        <Sep $ml={7} $mr={6} />
        <Slot $w={20}><FindIco /></Slot>
        <Slot $w={14}><Overflow /></Slot>
        <Grip />
        <Combo $w={105} $ml={7}><Clip>(New Inline Style</Clip><DdSmall /></Combo>
        <Slot $w={21} $on $ml={4}><Resize /></Slot>
        <Slot $w={21} $on $ml={1}><Abso /></Slot>
        <Combo $w={70} $ml={3}>(None)<DdSmall /></Combo>
        <Combo $w={60} $ml={6}><Clip>(Default</Clip><DdSmall /></Combo>
        <Slot $w={30}><GlyphB>B</GlyphB></Slot>
        <Slot $w={12}><GlyphB $i>I</GlyphB></Slot>
        <Slot $w={30}><GlyphB $u>U</GlyphB></Slot>
        <Sep $ml={0} $mr={0} />
        <Slot $w={28}><AIco /></Slot>
        <Slot $w={18}><BgIco /></Slot>
        <Slot $w={26}><AlignIco /></Slot>
        <Slot $w={8}><DdSmall /></Slot>
        <Slot $w={26}><LinkIco /></Slot>
        <Slot $w={12}><Overflow /></Slot>
      </ToolBar>
      <Main>
        <Side $w={198}>
          <PaneHead>Server Explorer<HeadDots /><PaneBtns /></PaneHead>
          <PaneTools>
            <Slot $w={16}><Refresh /></Slot>
            <Slot $w={28}><XIco c="#c4c4c8" s={10} /></Slot>
            <Sep $ml={0} $mr={6} />
            <Slot $w={20}><PlugAdd /></Slot>
            <Slot $w={22}><ServAdd /></Slot>
            <Slot $w={22}><SpAdd /></Slot>
            <Sep $ml={4} $mr={4} />
            <Slot $w={20}><TreeV /></Slot>
          </PaneTools>
          <Tree>
            {tree.map(n => (
              <TreeRow key={n.t} $lvl={n.l} $sel={n.sel}>
                <Arrow>{n.a === "o" ? <TriOpen /> : n.a === "c" ? <TriClosed /> : null}</Arrow>
                <TreeIcon>{n.i}</TreeIcon>
                {n.t}
              </TreeRow>
            ))}
          </Tree>
          <HScroll><NavTri c="#777" /><Thumb /><NavTri right c="#777" /></HScroll>
          <DockTabs $h={21}>
            <DockTab $w={82} $on $sep>Server Explorer</DockTab>
            <DockTab $w={60}>Toolbox</DockTab>
          </DockTabs>
        </Side>
        <Center>
          <DocTabs>
            <DocTab $w={237}>MultipleRowUpdateGridview.aspx.cs</DocTab>
            <DocTab $w={229} $on>
              <DocTabName>MultipleRowUpdateGridview.aspx*</DocTabName>
              <S w={9} h={9}><path d="M0 4.500h3M3 2v5M3 2h5v5H3M3 4.500h5" stroke="#fff" fill="none" /></S>
              <TabClose><XIco c="#fff" /></TabClose>
            </DocTab>
            <DocTab $w={200}>MultipleRowDeleteGridView.aspx.cs</DocTab>
            <DocMore><Overflow /></DocMore>
          </DocTabs>
          <DocBody>
            <Canvas>
              <Margins>
                <GridBox>
                  <OutDot />
                  <BoxHead>GridView1 - Column[2] - City</BoxHead>
                  <Tpl $mt={6} $h={88}>
                    <BoxHead>ItemTemplate</BoxHead>
                    <TplBody>
                      <TagChip>asp:label#lblCity</TagChip>
                      <LabelWrap><LabelSel>Label</LabelSel></LabelWrap>
                      <Chevron><Chev /></Chevron>
                      <Tasks>
                        <TasksHead>Label Tasks</TasksHead>
                        <TasksLink>Edit DataBindings...</TasksLink>
                      </Tasks>
                      <FakeInput />
                    </TplBody>
                  </Tpl>
                  <Tpl $mt={6} $h={71}>
                    <BoxHead>AlternatingItemTemplate</BoxHead>
                    <TplDots />
                  </Tpl>
                  <Tpl $mt={6} $h={71}><BoxHead $dim /><TplDots /></Tpl>
                  <Tpl $mt={6} $h={71}><BoxHead $dim /><TplDots /></Tpl>
                  <Tpl $mt={7} $h={70}><BoxHead $dim /><TplDots /></Tpl>
                </GridBox>
                <FootBtn />
              </Margins>
            </Canvas>
            <VBar><DownTri /></VBar>
          </DocBody>
          <HBar><NavTri c="#c8c8cc" /><NavTri right c="#c8c8cc" /></HBar>
          <ViewBar>
            <ViewBtn $w={69} $on><S w={8} h={8}><path d="M.5.5h5v7h-5z" fill="#fff" stroke="#555" /><path d="M3 3h5v5H3z" fill="#555" /></S>Design</ViewBtn>
            <ViewBtn $w={55}><S w={8} h={8}><path d="M.5.5h7v7h-7zM2 4h4" fill="none" stroke="#555" /></S>Split</ViewBtn>
            <ViewSep />
            <ViewBtn $w={67}><S w={8} h={6}><path d="M3 .5L.5 3 3 5.500M5 .5L7.500 3 5 5.500" stroke="#555" fill="none" /></S>Source</ViewBtn>
            <ViewSep />
            <CrumbNav $ml={23}><NavTri /></CrumbNav>
            <Crumb $w={67}>&lt;Columns&gt;</Crumb>
            <Crumb $w={115}>&lt;asp:TemplateField&gt;</Crumb>
            <Crumb $w={93}>&lt;ItemTemplate&gt;</Crumb>
            <Crumb $w={114} $plain>&lt;asp:Label#Label1&gt;</Crumb>
            <CrumbNav $ml={151}><NavTri right /></CrumbNav>
          </ViewBar>
        </Center>
        <Side $w={247} $ml={6}>
          <PaneHead>Solution Explorer<HeadDots /><PaneBtns /></PaneHead>
          <PaneTools>
            <Slot $w={18}><BackC c="#c4c4c8" /></Slot>
            <Slot $w={26}><FwdC c="#c4c4c8" /></Slot>
            <Slot $w={18}><Home /></Slot>
            <Sep $ml={6} $mr={6} />
            <Slot $w={20}><Clock /></Slot>
            <Slot $w={12}><DdSmall /></Slot>
            <Slot $w={22}><SyncArr /></Slot>
            <Slot $w={22}><Refresh c="#333" /></Slot>
            <Slot $w={22}><Stack /></Slot>
            <Slot $w={21} $on $ml={1}><Files /></Slot>
            <Sep $ml={3} $mr={4} />
            <Slot $w={22}><S w={12} h={8}><path d="M4 .5L.5 4 4 7.500M8 .5L11.500 4 8 7.500" stroke="#222" strokeWidth="1.200" fill="none" /></S></Slot>
          </PaneTools>
          <SearchBox>Search Solution Explorer (Ctrl+;)<Slot $w={26}><Mag /><DdSmall /></Slot></SearchBox>
          <SolRow>
            <SlnI />Solution 'query1.sln (2)' (1 project)
            <SolNext />
            <MiniScroll><UpTri /><DownTri c="#888" /></MiniScroll>
          </SolRow>
          <DockTabs $h={20}>
            <DockTab $w={93} $on $sep $pb={2}>Solution Explor...</DockTab>
            <DockTab $w={85} $sep $pb={2}>Team Explorer</DockTab>
            <DockTab $w={60} $pb={2}>Class View</DockTab>
          </DockTabs>
          <Strip />
          <PaneHead $mt={1}>Properties<HeadDots /><PaneBtns /></PaneHead>
          <PropCombo>GridView1.Column2City.ItemTemplate.lb<DdSmall /></PropCombo>
          <PaneTools $mt={1}>
            <Slot $w={22}><PropCat /></Slot>
            <Slot $w={22} $on><AzIco /></Slot>
            <Sep $ml={3} $mr={3} />
            <Slot $w={22} $on><PropPage /></Slot>
            <Slot $w={22}><Bolt /></Slot>
            <Sep $ml={6} $mr={6} />
            <Slot $w={22}><Wrench /></Slot>
          </PaneTools>
          <PropGrid>
            {props.map(([n, v, b, plus]) => (
              <PropRow key={n}>
                <PlusCell>{plus ? <Plus /> : null}</PlusCell>
                <PropName>{n}</PropName>
                <PropVal $b={b}>{v}</PropVal>
              </PropRow>
            ))}
          </PropGrid>
          <PropDesc>
            <DescTitle>(ID)</DescTitle>
            <DescLine>Programmatic name of the control.</DescLine>
          </PropDesc>
        </Side>
      </Main>
      <Status>Drag margin handles to resize margins. Press SHIFT or CTRL for more options.</Status>
      <Taskbar>
        <Swoosh width="180" height="40" viewBox="0 0 180 40"><path d="M105 2q18 16 40 38h-22Q112 20 95 2z" fill="#9cc8e8" opacity=".65" /><path d="M0 0h170v3H0z" fill="#0b2d4a" opacity=".25" /></Swoosh>
        <PinCell $w={55}><Orb /></PinCell>
        <PinCell $w={62}><IeIco /></PinCell>
        <PinCell $w={61}><Explorer /></PinCell>
        <PinCell $w={67}><Media /></PinCell>
        <Tile><Sticky /></Tile>
        <Tile><Skype /></Tile>
        <Tile><Broom /></Tile>
        <Tile $hot><VsTile /></Tile>
        <Tile><Chrome /></Tile>
        <Tray>
          <PinCell $w={24}><S w={8} h={5}><path d="M4 0l4 5H0z" fill="#fff" /></S></PinCell>
          <PinCell $w={24}><Flag /></PinCell>
          <PinCell $w={26}><Net /></PinCell>
          <PinCell $w={19}><Vol /></PinCell>
          <ShowDesk />
        </Tray>
      </Taskbar>

      <Dialog>
        <DlgTitle>
          lblCity DataBindings
          <DlgBtns><DlgHelp>?</DlgHelp><DlgClose><XIco c="#fff" s={12} sw={2.6} /></DlgClose></DlgBtns>
        </DlgTitle>
        <DlgBody>
          <DlgDesc>Select the property to bind to. You can then bind it by selecting a field. Alternatively, you can bind it using a custom code expression.</DlgDesc>
          <DlgCols>
            <div>
              <ColLabel>Bindable properties:</ColLabel>
              <ListBox>
                <ListRow><Bind /><ListText>Enabled</ListText></ListRow>
                <ListRow><Bind /><ListText $hi>Text</ListText></ListRow>
                <ListRow><Bind /><ListText>Visible</ListText></ListRow>
              </ListBox>
              <CheckRow $mt={6}><Check />Show all properties</CheckRow>
            </div>
            <div>
              <ColLabel>Binding for Text</ColLabel>
              <RadioRow $off $mt={16} $gap={3}><Radio />Field binding:</RadioRow>
              <FieldRow $mt={6}><FieldLbl>Bound to:</FieldLbl><FieldBox><DownTri c="#aaa" /></FieldBox></FieldRow>
              <FieldRow $mt={12}><FieldLbl>Format:</FieldLbl><FieldBox><FieldInner /><DownTri c="#aaa" /></FieldBox></FieldRow>
              <FieldRow $mt={12}><FieldLbl>Sample:</FieldLbl><FieldBox /></FieldRow>
              <CheckRow $off $mt={10} $ml={173}><Check />Two-way databinding</CheckRow>
              <RadioRow $mt={17} $gap={6}><Radio $on />Custom binding:</RadioRow>
              <CodeLbl>Code expression:</CodeLbl>
              <CodeInput>Eval("city<Caret />")</CodeInput>
            </div>
          </DlgCols>
          <DlgActions>
            <DlgBtn $def>OK</DlgBtn>
            <DlgBtn>Cancel</DlgBtn>
          </DlgActions>
        </DlgBody>
      </Dialog>

      <Red $x={42} $y={182} $w={151} $h={83} />
      <Red $x={275} $y={150} $w={225} $h={89} />
      <Red $x={1131} $y={285} $w={79} $h={52} />
      <Red $x={572} $y={599} $w={145} $h={38} />
    </Page>
  );
}
